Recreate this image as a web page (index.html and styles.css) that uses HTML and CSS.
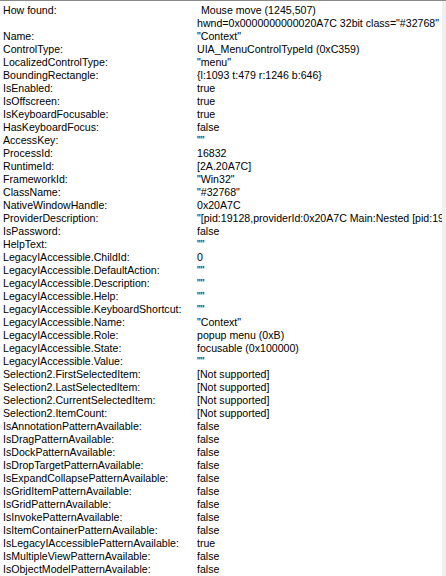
FILE: index.html
```html
<!DOCTYPE html>
<html>
<head>
<meta charset="utf-8">
<link rel="stylesheet" href="styles.css">
</head>
<body>
<div class="frame">
  <div class="pane">
    <div class="grid">
      <div class="k">How found:</div><div class="v ind">Mouse move (1245,507)</div>
      <div class="k"></div><div class="v">hwnd=0x0000000000020A7C 32bit class="#32768" style=0x84800000 ex=0x181</div>
      <div class="k">Name:</div><div class="v">"Context"</div>
      <div class="k">ControlType:</div><div class="v">UIA_MenuControlTypeId (0xC359)</div>
      <div class="k">LocalizedControlType:</div><div class="v">"menu"</div>
      <div class="k">BoundingRectangle:</div><div class="v">{l:1093 t:479 r:1246 b:646}</div>
      <div class="k">IsEnabled:</div><div class="v">true</div>
      <div class="k">IsOffscreen:</div><div class="v">true</div>
      <div class="k">IsKeyboardFocusable:</div><div class="v">true</div>
      <div class="k">HasKeyboardFocus:</div><div class="v">false</div>
      <div class="k">AccessKey:</div><div class="v">""</div>
      <div class="k">ProcessId:</div><div class="v">16832</div>
      <div class="k">RuntimeId:</div><div class="v">[2A.20A7C]</div>
      <div class="k">FrameworkId:</div><div class="v">"Win32"</div>
      <div class="k">ClassName:</div><div class="v">"#32768"</div>
      <div class="k">NativeWindowHandle:</div><div class="v">0x20A7C</div>
      <div class="k">ProviderDescription:</div><div class="v">"[pid:19128,providerId:0x20A7C Main:Nested [pid:19128,providerId:0x20A7C Annotation]"</div>
      <div class="k">IsPassword:</div><div class="v">false</div>
      <div class="k">HelpText:</div><div class="v">""</div>
      <div class="k">LegacyIAccessible.ChildId:</div><div class="v">0</div>
      <div class="k">LegacyIAccessible.DefaultAction:</div><div class="v">""</div>
      <div class="k">LegacyIAccessible.Description:</div><div class="v">""</div>
      <div class="k">LegacyIAccessible.Help:</div><div class="v">""</div>
      <div class="k">LegacyIAccessible.KeyboardShortcut:</div><div class="v">""</div>
      <div class="k">LegacyIAccessible.Name:</div><div class="v">"Context"</div>
      <div class="k">LegacyIAccessible.Role:</div><div class="v">popup menu (0xB)</div>
      <div class="k">LegacyIAccessible.State:</div><div class="v">focusable (0x100000)</div>
      <div class="k">LegacyIAccessible.Value:</div><div class="v">""</div>
      <div class="k">Selection2.FirstSelectedItem:</div><div class="v">[Not supported]</div>
      <div class="k">Selection2.LastSelectedItem:</div><div class="v">[Not supported]</div>
      <div class="k">Selection2.CurrentSelectedItem:</div><div class="v">[Not supported]</div>
      <div class="k">Selection2.ItemCount:</div><div class="v">[Not supported]</div>
      <div class="k">IsAnnotationPatternAvailable:</div><div class="v">false</div>
      <div class="k">IsDragPatternAvailable:</div><div class="v">false</div>
      <div class="k">IsDockPatternAvailable:</div><div class="v">false</div>
      <div class="k">IsDropTargetPatternAvailable:</div><div class="v">false</div>
      <div class="k">IsExpandCollapsePatternAvailable:</div><div class="v">false</div>
      <div class="k">IsGridItemPatternAvailable:</div><div class="v">false</div>
      <div class="k">IsGridPatternAvailable:</div><div class="v">false</div>
      <div class="k">IsInvokePatternAvailable:</div><div class="v">false</div>
      <div class="k">IsItemContainerPatternAvailable:</div><div class="v">false</div>
      <div class="k">IsLegacyIAccessiblePatternAvailable:</div><div class="v">true</div>
      <div class="k">IsMultipleViewPatternAvailable:</div><div class="v">false</div>
      <div class="k">IsObjectModelPatternAvailable:</div><div class="v">false</div>
    </div>
  </div>
  <div class="scroll"></div>
</div>
</body>
</html>
```
FILE: styles.css
```css
html, body {
  margin: 0;
  padding: 0;
  background: #ffffff;
}
.frame {
  display: flex;
  width: 446px;
  height: 576px;
  overflow: hidden;
  border-top: 1px solid #8a8a8a;
  box-sizing: border-box;
}
.pane {
  flex: 0 0 442px;
  width: 442px;
  overflow: hidden;
  padding-top: 3px;
  background: #ffffff;
}
.scroll {
  flex: 1;
  background: #f0f0f0;
}
.grid {
  display: grid;
  grid-template-columns: 197px max-content;
  grid-auto-rows: 13px;
  font-family: "Liberation Sans", Arial, sans-serif;
  font-size: 10.6px;
  line-height: 13px;
  color: #000000;
}
.k {
  padding-left: 3px;
  white-space: nowrap;
}
.v {
  white-space: nowrap;
}
.ind {
  padding-left: 4px;
}
```
